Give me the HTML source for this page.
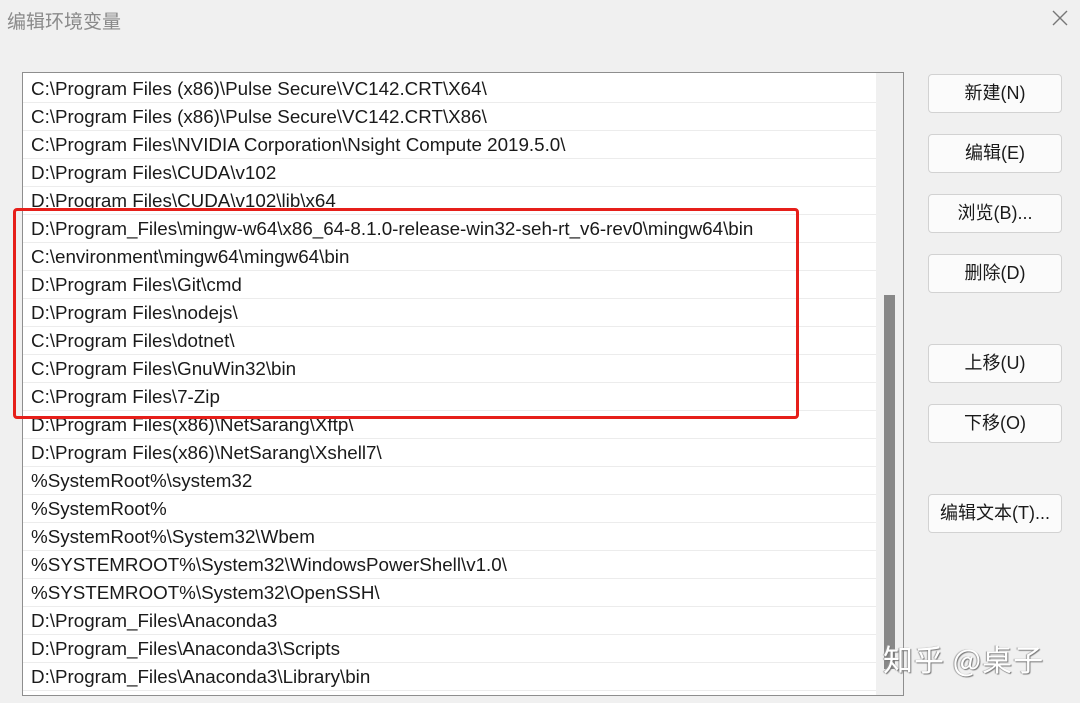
<!DOCTYPE html>
<html><head><meta charset="utf-8"><style>
*{margin:0;padding:0;box-sizing:border-box}
body{width:1080px;height:703px;background:#f0f0f0;position:relative;overflow:hidden;font-family:"Liberation Sans","Noto Sans CJK SC",sans-serif;color:#1a1a1a}
.title{position:absolute;left:7px;top:7px;font-size:19px;color:#8a8a8a}
.close{position:absolute;left:1050px;top:8px;width:20px;height:20px}
.list{position:absolute;left:22px;top:72px;width:882px;height:624px;border:1px solid #8e8e8e;background:#fff;overflow:hidden}
.row{position:absolute;left:0;width:853px;height:28px;border-bottom:1px solid #ececec;font-size:18.8px;line-height:28px;padding-left:8px;white-space:nowrap}
.track{position:absolute;left:853px;top:0;width:28px;height:624px;background:#f0f0f0}
.thumb{position:absolute;left:861px;top:222px;width:11px;height:374px;background:#888}
.btn{position:absolute;left:928px;width:134px;height:39px;border:1px solid #d2d2d2;border-radius:4px;background:#fbfbfb;font-size:18px;text-align:center;line-height:37px}
.red{position:absolute;left:13px;top:208px;width:786px;height:211px;border:3px solid #e61f1a;border-radius:4px}
.wm{position:absolute;left:883px;top:636px;font-size:30px;color:#fff;text-shadow:1px 1px 1px #777,-1px 0 1px #999;font-family:"Noto Sans CJK SC",sans-serif;letter-spacing:1px}
</style></head><body>
<div class="title">编辑环境变量</div>
<svg class="close" viewBox="0 0 20 20"><path d="M3 3L17 17M17 3L3 17" stroke="#777" stroke-width="1.4"/></svg>
<div class="list">
<div class="row" style="top:2px">C:\Program Files (x86)\Pulse Secure\VC142.CRT\X64\</div>
<div class="row" style="top:30px">C:\Program Files (x86)\Pulse Secure\VC142.CRT\X86\</div>
<div class="row" style="top:58px">C:\Program Files\NVIDIA Corporation\Nsight Compute 2019.5.0\</div>
<div class="row" style="top:86px">D:\Program Files\CUDA\v102</div>
<div class="row" style="top:114px">D:\Program Files\CUDA\v102\lib\x64</div>
<div class="row" style="top:142px">D:\Program_Files\mingw-w64\x86_64-8.1.0-release-win32-seh-rt_v6-rev0\mingw64\bin</div>
<div class="row" style="top:170px">C:\environment\mingw64\mingw64\bin</div>
<div class="row" style="top:198px">D:\Program Files\Git\cmd</div>
<div class="row" style="top:226px">D:\Program Files\nodejs\</div>
<div class="row" style="top:254px">C:\Program Files\dotnet\</div>
<div class="row" style="top:282px">C:\Program Files\GnuWin32\bin</div>
<div class="row" style="top:310px">C:\Program Files\7-Zip</div>
<div class="row" style="top:338px">D:\Program Files(x86)\NetSarang\Xftp\</div>
<div class="row" style="top:366px">D:\Program Files(x86)\NetSarang\Xshell7\</div>
<div class="row" style="top:394px">%SystemRoot%\system32</div>
<div class="row" style="top:422px">%SystemRoot%</div>
<div class="row" style="top:450px">%SystemRoot%\System32\Wbem</div>
<div class="row" style="top:478px">%SYSTEMROOT%\System32\WindowsPowerShell\v1.0\</div>
<div class="row" style="top:506px">%SYSTEMROOT%\System32\OpenSSH\</div>
<div class="row" style="top:534px">D:\Program_Files\Anaconda3</div>
<div class="row" style="top:562px">D:\Program_Files\Anaconda3\Scripts</div>
<div class="row" style="top:590px">D:\Program_Files\Anaconda3\Library\bin</div>
<div class="track"></div>
<div class="thumb"></div>
</div>
<div class="red"></div>
<div class="btn" style="top:74px">新建(N)</div>
<div class="btn" style="top:134px">编辑(E)</div>
<div class="btn" style="top:194px">浏览(B)...</div>
<div class="btn" style="top:254px">删除(D)</div>
<div class="btn" style="top:344px">上移(U)</div>
<div class="btn" style="top:404px">下移(O)</div>
<div class="btn" style="top:494px">编辑文本(T)...</div>
<div class="wm">知乎 @桌子</div>
</body></html>
